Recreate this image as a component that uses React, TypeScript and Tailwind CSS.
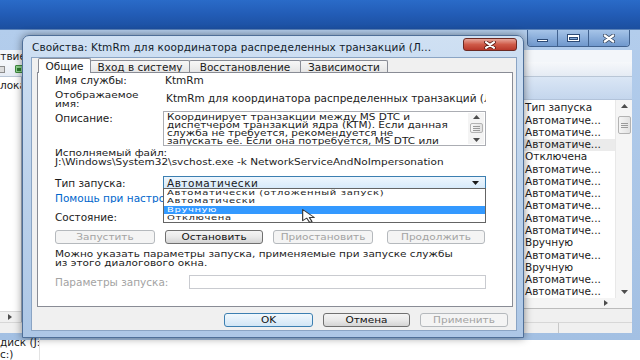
import React from "react";

const listRows = [
  "Автоматиче...",
  "Автоматиче...",
  "Автоматиче...",
  "Отключена",
  "Автоматиче...",
  "Автоматиче...",
  "Автоматиче...",
  "Автоматиче...",
  "Автоматиче...",
  "Автоматиче...",
  "Вручную",
  "Автоматиче...",
  "Вручную",
  "Автоматиче...",
  "Автоматиче...",
];

const descriptionLines = [
  "Координирует транзакции между MS DTC и",
  "диспетчером транзакций ядра (KTM). Если данная",
  "служба не требуется, рекомендуется не",
  "запускать ее. Если она потребуется, MS DTC или",
];

const startupOptions = [
  "Автоматически (отложенный запуск)",
  "Автоматически",
  "Вручную",
  "Отключена",
];

// the capture is squashed vertically, so tightly stacked lines get flattened glyphs
const squish = "origin-center scale-y-[0.8]";

const Arrow = ({ up }: { up?: boolean }) => (
  <svg width="7" height="4" viewBox="0 0 7 4">
    <path d={up ? "M0 4 L3.5 0 L7 4 Z" : "M0 0 L3.5 4 L7 0 Z"} fill="#4d4d4d" />
  </svg>
);

const Grip = () => (
  <div className="flex flex-col items-center gap-[1px]">
    <div className="h-px w-[7px] bg-[#9a9a9a]" />
    <div className="h-px w-[7px] bg-[#9a9a9a]" />
    <div className="h-px w-[7px] bg-[#9a9a9a]" />
  </div>
);

/**
 * Win7 push button.
 */
const Button = ({
  label,
  width,
  disabled,
  focused,
}: {
  label: string;
  width: string;
  disabled?: boolean;
  focused?: boolean;
}) => (
  <div
    className={
      width +
      " flex h-[14px] items-center justify-center rounded-[3px] border leading-[12px] " +
      (disabled
        ? "border-[#b5b9bd] bg-[#f4f4f4] text-[#a3a3a3]"
        : focused
          ? "border-[#3c7fb1] bg-gradient-to-b from-[#f1f8fd] to-[#d2e6f6] text-[#111]"
          : "border-[#707070] bg-gradient-to-b from-[#f4f4f4] via-[#e9e9e9] to-[#d4d4d4] text-[#111]")
    }
  >
    <span className={squish + " block"}>{label}</span>
  </div>
);

const ServicesWindow = () => (
  <div className="flex h-[311px] shrink-0 flex-col border-t border-[#5a82b8] bg-gradient-to-b from-[#b3cdec] to-[#a3c0e3]">
    {/* caption */}
    <div className="flex h-[20px] shrink-0 justify-end pr-[10px]">
      <div className="flex h-[17px] overflow-hidden rounded-b-[4px] border border-t-0 border-[#41628f]">
        <div className="flex w-[30px] items-end justify-center border-r border-[#41628f] bg-gradient-to-b from-[#a6c4e8] to-[#7098cd] pb-[4px]">
          <div className="h-[3px] w-[11px] border border-[#2c4a75] bg-white" />
        </div>
        <div className="flex w-[31px] items-center justify-center border-r border-[#41628f] bg-gradient-to-b from-[#a6c4e8] to-[#7098cd]">
          <div className="h-[8px] w-[13px] border border-[#2c4a75] bg-white p-[1px] pt-[2px]">
            <div className="h-full w-full border border-[#2c4a75] bg-[#7fa5d6]" />
          </div>
        </div>
        <div className="flex w-[40px] items-center justify-center bg-gradient-to-b from-[#a6c4e8] to-[#7098cd]">
          <svg width="12" height="9" viewBox="0 0 10 7">
            <path d="M1.5 1 L8.5 6 M8.5 1 L1.5 6" stroke="#33425a" strokeWidth="3.2" strokeLinecap="round" />
            <path d="M1.5 1 L8.5 6 M8.5 1 L1.5 6" stroke="#ffffff" strokeWidth="1.8" strokeLinecap="round" />
          </svg>
        </div>
      </div>
    </div>

    <div className="flex min-h-0 flex-1">
      <div className="flex min-w-0 flex-1 flex-col bg-[#f0f0f0]">
        {/* menu */}
        <div className="flex h-[12px] shrink-0 items-center overflow-hidden whitespace-nowrap bg-[#f3f6fa] leading-[10px]">
          <span className="ml-[-27px]">Действие</span>
        </div>
        {/* toolbar */}
        <div className="flex h-[15px] shrink-0 items-center border-b border-[#b9c6d6] bg-gradient-to-b from-[#f6f8fb] to-[#e5ebf4]">
          <div className="h-[7px] w-[5px] border border-l-0 border-[#8c8c8c] bg-[#dcdcdc]" />
          <div className="ml-[10px] flex h-[8px] w-[8px] items-center justify-center rounded-[1px] border border-[#3f8a3f] bg-[#8fd18f]">
            <div className="h-[3px] w-[4px] bg-[#2f7d2f]" />
          </div>
        </div>
        {/* panes */}
        <div className="flex h-[245px] shrink-0">
          <div className="flex w-[22px] flex-col border-r border-[#a7b3c2] bg-white">
            <div className="flex-1 overflow-hidden whitespace-nowrap pt-[2px] leading-[12px]">
              <span className="ml-[-52px]">Службы (локальные)</span>
            </div>
            <div className="flex h-[11px] items-center justify-end border-t border-[#d9d9d9] bg-[#f0f0f0] pr-[9px]">
              <svg width="4" height="6" viewBox="0 0 4 6">
                <path d="M0 0 L4 3 L0 6 Z" fill="#4d4d4d" />
              </svg>
            </div>
          </div>
          <div className="flex min-w-0 flex-1 flex-col">
            <div className="h-[23px] shrink-0 border-b border-[#b2c3da] bg-gradient-to-b from-[#dae6f5] to-[#c4d6ed]" />
            <div className="flex h-[198px] shrink-0 bg-white">
              <div className="flex-1" />
              <div className="flex w-[92px] flex-col overflow-hidden whitespace-nowrap">
                <div className="flex h-[14px] items-center pl-[2px] leading-[11px]">
                  Тип запуска
                </div>
                {listRows.map((row, i) => (
                  <div
                    key={i}
                    className={
                      "flex h-[12.27px] items-center pl-[2px] leading-[11px] " +
                      (i === 2 ? "bg-[#ebebeb]" : "")
                    }
                  >
                    {row}
                  </div>
                ))}
              </div>
              <div className="flex w-[17px] flex-col items-center border-l border-[#e8e8e8] bg-[#f5f5f5]">
                <div className="flex h-[12px] items-center">
                  <Arrow up />
                </div>
                <div className="mt-[4px] flex h-[18px] w-[13px] items-center justify-center rounded-[2px] border border-[#b3b3b3] bg-gradient-to-r from-[#f5f5f5] to-[#e2e2e2]">
                  <Grip />
                </div>
                <div className="flex-1" />
                <div className="flex h-[12px] items-center">
                  <Arrow />
                </div>
              </div>
            </div>
            <div className="flex h-[10px] shrink-0 items-center justify-end bg-[#f5f5f5] pr-[24px]">
              <svg width="4" height="6" viewBox="0 0 4 6">
                <path d="M0 0 L4 3 L0 6 Z" fill="#4d4d4d" />
              </svg>
            </div>
            <div className="h-[14px] shrink-0 border-t border-[#bcbcbc] bg-[#f0f0f0]" />
          </div>
        </div>
        {/* status bar */}
        <div className="flex h-[11px] shrink-0 border-t border-[#d7d7d7] bg-[#f0f0f0]">
          <div className="flex-1" />
          <div className="w-[74px] border-l border-[#c8c8c8]" />
        </div>
      </div>
      <div className="w-[8px] shrink-0" />
    </div>
    <div className="h-[7px] shrink-0" />
  </div>
);

const PropertiesDialog = () => (
  <div className="absolute left-[22px] top-[35px] flex h-[303px] w-[502px] flex-col rounded-t-[7px] border border-[#4f6f98] bg-gradient-to-b from-[#cfe0f3] via-[#bcd2eb] to-[#adc7e6] shadow-[0_0_9px_rgba(0,0,0,0.45)]">
    {/* title */}
    <div className="flex h-[21px] shrink-0 items-center">
      <div className="pl-[9px] leading-[12px] tracking-[0.08px] whitespace-nowrap text-[#121c2b]">
        Свойства: KtmRm для координатора распределенных транзакций (Л...
      </div>
      <div className="mt-[2px] mr-[6px] ml-auto flex h-[13px] w-[54px] shrink-0 items-center justify-center self-start rounded-[3px] border border-[#6b2a24] bg-gradient-to-b from-[#e6a59a] via-[#cf5a48] to-[#b8382a]">
        <svg width="12" height="8" viewBox="0 0 10 7">
          <path d="M1.5 1 L8.5 6 M8.5 1 L1.5 6" stroke="#5a1c16" strokeWidth="3.2" strokeLinecap="round" />
          <path d="M1.5 1 L8.5 6 M8.5 1 L1.5 6" stroke="#ffffff" strokeWidth="1.8" strokeLinecap="round" />
        </svg>
      </div>
    </div>

    {/* client */}
    <div className="mr-[6px] mb-[6px] ml-[8px] flex flex-1 flex-col border border-[#8aa4c4] bg-[#f0f0f0]">
      {/* tabs */}
      <div className="flex h-[15px] shrink-0 items-end pl-[6px] leading-[12px]">
        <div className="relative flex h-[15px] w-[53px] items-center justify-center rounded-t-[2px] border border-b-0 border-[#898c95] bg-white">
          Общие
        </div>
        <div className="-ml-px flex h-[13px] w-[100px] items-center justify-center rounded-t-[2px] border border-b-0 border-[#898c95] bg-gradient-to-b from-[#f7f7f7] to-[#e4e4e4]">
          Вход в систему
        </div>
        <div className="-ml-px flex h-[13px] w-[112px] items-center justify-center rounded-t-[2px] border border-b-0 border-[#898c95] bg-gradient-to-b from-[#f7f7f7] to-[#e4e4e4]">
          Восстановление
        </div>
        <div className="-ml-px flex h-[13px] w-[88px] items-center justify-center rounded-t-[2px] border border-b-0 border-[#898c95] bg-gradient-to-b from-[#f7f7f7] to-[#e4e4e4]">
          Зависимости
        </div>
      </div>

      {/* tab panel */}
      <div className="-mt-px mr-[3px] ml-[5px] h-[235px] shrink-0 border border-[#898c95] bg-white pl-[17px]">
        <div className="flex h-[14px] items-center leading-[12px]">
          <div className="w-[108px]">Имя службы:</div>
          <div className="pl-[2px]">KtmRm</div>
        </div>

        <div className="mt-[4px] flex leading-[9px]">
          <div className="w-[108px]">
            <div className={squish}>Отображаемое</div>
            <div className={squish}>имя:</div>
          </div>
          <div className="w-[323px] overflow-hidden whitespace-nowrap pt-[3px] pl-[3px]">
            KtmRm для координатора распределенных транзакций (Локальная система)
          </div>
        </div>

        <div className="mt-[2px] flex">
          <div className="w-[108px] pt-[3px] leading-[9px]">Описание:</div>
          <div className="flex h-[35px] w-[323px] border border-[#abadb3] bg-white">
            <div className="min-w-0 flex-1 overflow-hidden whitespace-nowrap pt-[1px] pl-[3px] leading-[8px]">
              {descriptionLines.map((line) => (
                <div key={line} className={squish}>
                  {line}
                </div>
              ))}
            </div>
            <div className="my-[1px] mr-[1px] flex w-[16px] flex-col items-center bg-[#f4f4f4]">
              <div className="flex h-[8px] items-center">
                <Arrow up />
              </div>
              <div className="mt-[2px] flex h-[10px] w-[13px] items-center justify-center rounded-[2px] border border-[#b3b3b3] bg-gradient-to-r from-[#f7f7f7] to-[#e2e2e2]">
                <Grip />
              </div>
              <div className="flex-1" />
              <div className="flex h-[8px] items-center">
                <Arrow />
              </div>
            </div>
          </div>
        </div>

        <div className="mt-[3px] leading-[9px] whitespace-nowrap">
          <div className={squish}>Исполняемый файл:</div>
          <div className={squish}>J:\Windows\System32\svchost.exe -k NetworkServiceAndNoImpersonation</div>
        </div>

        <div className="mt-[9px] flex h-[13px] items-center leading-[10px]">
          <div className="w-[108px]">Тип запуска:</div>
          <div className="relative flex h-[13px] w-[323px] items-center border border-[#3c7fb1] bg-gradient-to-b from-[#eef6fd] to-[#d7eafa] pl-[3px]">
            <span className="flex-1 tracking-[0.5px]">Автоматически</span>
            <div className="mr-[6px]">
              <svg width="7" height="4" viewBox="0 0 7 4">
                <path d="M0 0 L3.5 4 L7 0 Z" fill="#1a1a1a" />
              </svg>
            </div>
            <div className="absolute top-[11px] left-[-1px] w-[323px] border border-[#646464] bg-white text-[10px]">
              {startupOptions.map((opt) => (
                <div
                  key={opt}
                  className={
                    "flex h-[8.3px] items-center overflow-hidden pl-[3px] leading-[8px] tracking-[0.6px] " +
                    (opt === "Вручную" ? "bg-[#3399ff] text-white" : "")
                  }
                >
                  <span className="block origin-center scale-y-[0.72]">{opt}</span>
                </div>
              ))}
            </div>
          </div>
        </div>

        <div className="mt-[5px] w-[108px] overflow-hidden leading-[9px] whitespace-nowrap">
          <span className="text-[#0066cc] underline">Помощь при настройке</span>
        </div>

        <div className="mt-[10px] flex leading-[9px]">
          <div className="w-[108px]">Состояние:</div>
        </div>

        <div className="mt-[8px] flex">
          <Button label="Запустить" width="w-[100px]" disabled />
          <div className="ml-[10px]">
            <Button label="Остановить" width="w-[98px]" />
          </div>
          <div className="ml-[10px]">
            <Button label="Приостановить" width="w-[100px]" disabled />
          </div>
          <div className="ml-[14px]">
            <Button label="Продолжить" width="w-[98px]" disabled />
          </div>
        </div>

        <div className="mt-[6px] leading-[9px] whitespace-nowrap">
          <div className={squish}>Можно указать параметры запуска, применяемые при запуске службы</div>
          <div className={squish}>из этого диалогового окна.</div>
        </div>

        <div className="mt-[7px] flex h-[14px] items-center leading-[10px]">
          <div className="w-[134px] text-[#a3a3a3]">Параметры запуска:</div>
          <div className="h-[14px] w-[297px] border border-[#c9cbd0] bg-white" />
        </div>
      </div>

      {/* dialog buttons */}
      <div className="mt-[6px] flex justify-end gap-[10px] pr-[8px]">
        <Button label="OK" width="w-[89px]" focused />
        <Button label="Отмена" width="w-[87px]" />
        <Button label="Применить" width="w-[88px]" disabled />
      </div>
    </div>
  </div>
);

const Cursor = () => (
  <svg
    className="absolute top-[209px] left-[302px]"
    width="13"
    height="14"
    viewBox="0 0 12 19"
    preserveAspectRatio="none"
  >
    <path
      d="M0.6 0.6 L0.6 16 L4.4 12.3 L6.9 18 L9.2 17 L6.8 11.5 L11.4 11.5 Z"
      fill="#ffffff"
      stroke="#3a3a3a"
      strokeWidth="1.1"
      strokeLinejoin="round"
    />
  </svg>
);

export default function App() {
  return (
    <div className="relative h-[360px] w-[640px] overflow-hidden bg-white font-['DejaVu_Sans',sans-serif] text-[10.5px] text-[#1b1b1b]">
      <div className="flex h-full flex-col">
        <div className="h-[29px] shrink-0 bg-gradient-to-b from-[#2a6bc8] via-[#225cb6] to-[#1c4f9f]" />
        <ServicesWindow />
        <div className="flex h-[20px] shrink-0 bg-white">
          <div className="-mt-[4px] w-[40px] overflow-hidden border-r border-[#e3e3e3] leading-[12px] whitespace-nowrap">
            <div>диск (J:</div>
            <div>c:)</div>
          </div>
        </div>
      </div>
      <PropertiesDialog />
      <Cursor />
    </div>
  );
}
